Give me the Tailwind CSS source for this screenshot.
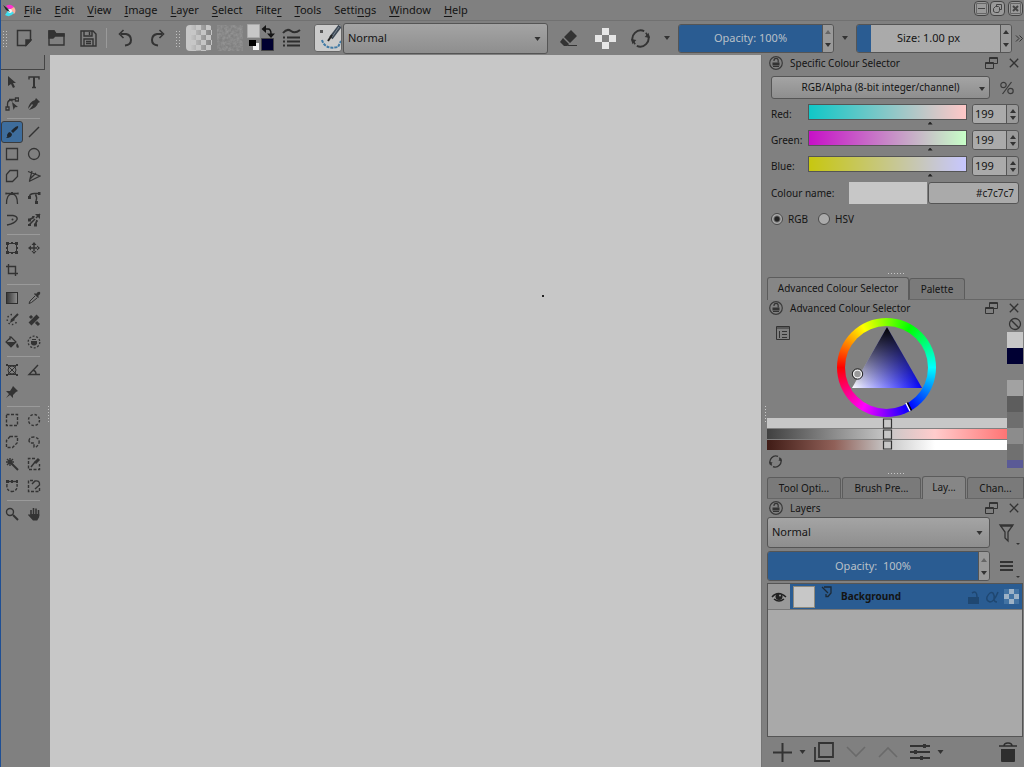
<!DOCTYPE html>
<html lang="en">
	<head>
		<meta charset="UTF-8" />
		<meta name="viewport" content="width=device-width, initial-scale=1.0" />
		<title>Krita</title>
		<script src="https://cdn.jsdelivr.net/npm/@tailwindcss/browser@4"></script>
	</head>
	<body class="bg-[#808080] text-[#141414] font-['Noto_Sans',sans-serif] text-[11px]">
		<!-- shared icons -->
		<svg class="hidden">
			<symbol id="lock" viewBox="0 0 14 14">
				<circle cx="7" cy="7" r="6.3" fill="none" stroke="#3a3a3a" stroke-width="1.2" />
				<path d="M3.5 6.500h7V9.500h-7z" fill="#333" />
				<path d="M5 5V4.500a2.1 2.1 0 0 1 4.2 0v2" fill="none" stroke="#333" stroke-width="1.2" />
				<path d="M4 10.500h6" stroke="#333" />
			</symbol>
			<symbol id="float" viewBox="0 0 13 12">
				<path d="M4.500 5V.5h8v6H8.500M4.500 1.500h8M.5 5.500h8v6h-8zM.5 6.500h8" fill="none" stroke="#333" />
			</symbol>
			<symbol id="close" viewBox="0 0 10 10">
				<path d="M.8.8l8.400 8.400M9.200.8L.8 9.200" fill="none" stroke="#333" stroke-width="1.300" />
			</symbol>
			<symbol id="down" viewBox="0 0 6 4">
				<path d="M0 0h6L3 4z" fill="#333" />
			</symbol>
			<symbol id="spin" viewBox="0 0 6 11">
				<path d="M0 4h6L3 0zM0 7h6L3 11z" fill="#333" />
			</symbol>
			<symbol id="reload" viewBox="0 0 18 18">
				<path d="M2 12.500A8 8 0 0 1 12.500 2M16 5.500A8 8 0 0 1 5.500 16" fill="none" stroke="#333" stroke-width="1.800" />
				<path d="M2.500 11.500A7.500 7.500 0 0 0 4 14.500M15.500 6.500A7.500 7.500 0 0 0 14 3.500" fill="none" stroke="#333" stroke-width="1.500" />
				<path d="M0 9.500l5 1-3.500 4zM18 8.500l-5-1 3.500-4z" fill="#333" />
			</symbol>
			<symbol id="checker" viewBox="0 0 9 9">
				<path d="M3 0h3v3h3v3H6v3H3V6H0V3h3z" fill="#c9c9c9" />
				<path d="M3 0h3v3H3zM0 3h3v3H0zM6 3h3v3H6zM3 6h3v3H3z" fill="#e6e6e6" />
				<path d="M3 3h3v3H3z" fill="#808080" />
			</symbol>
		</svg>

		<div class="flex flex-col min-h-screen border-l border-[#1f4f94]">
			<!-- menu bar -->
			<header class="flex h-[21px] items-center border-b border-[#717171] pl-[2px]">
				<svg width="13" height="13" viewBox="0 0 13 13">
					<path d="M3 2q4-3 8 1l-4 3z" fill="#ff2fd0" />
					<path d="M11 3q3 4 0 7L6 6z" fill="#ffb0a0" />
					<path d="M11 9q-4 5-9 2l4-6z" fill="#3fe0f0" />
					<circle cx="7" cy="7" r="2" fill="#f4f4f4" />
					<path d="M0 1l4 3 3 4-4-2z" fill="#222" />
				</svg>
				<nav class="flex flex-1 gap-[13px] pl-[8px] leading-5">
					<a href="#"><u class="underline-offset-2">F</u>ile</a>
					<a href="#"><u class="underline-offset-2">E</u>dit</a>
					<a href="#"><u class="underline-offset-2">V</u>iew</a>
					<a href="#"><u class="underline-offset-2">I</u>mage</a>
					<a href="#"><u class="underline-offset-2">L</u>ayer</a>
					<a href="#"><u class="underline-offset-2">S</u>elect</a>
					<a href="#">Filte<u class="underline-offset-2">r</u></a>
					<a href="#"><u class="underline-offset-2">T</u>ools</a>
					<a href="#">Setti<u class="underline-offset-2">n</u>gs</a>
					<a href="#"><u class="underline-offset-2">W</u>indow</a>
					<a href="#"><u class="underline-offset-2">H</u>elp</a>
				</nav>
				<div class="flex gap-px pr-px pb-[3px]">
					<button aria-label="Minimise" class="w-[15px] h-[15px] grid place-items-center rounded-sm border border-[#444] bg-[#999]">
						<svg width="11" height="11" fill="none" stroke="#444"><path d="M.5.500h10v10h-10z" stroke="#666" /><path d="M2 5.500h7" /></svg>
					</button>
					<button aria-label="Restore" class="w-[15px] h-[15px] grid place-items-center rounded-sm border border-[#444] bg-[#999]">
						<svg width="11" height="11" fill="none" stroke="#444"><path d="M4.500 3.500v-2h5v5h-2M1.500 5.500l2-2h3l1 1v3l-1 2h-3l-2-1z" /></svg>
					</button>
					<button aria-label="Close" class="w-[15px] h-[15px] ml-[2px] grid place-items-center rounded-sm border border-[#444] bg-[#999]">
						<svg width="11" height="11" fill="none" stroke="#444"><path d="M.5.500h10v10h-10z" stroke="#666" /><path d="M3 3l5 5M8 3L3 8" stroke-width="2" /></svg>
					</button>
				</div>
			</header>

			<!-- tool bar -->
			<div class="flex h-[34px] items-center">
				<div class="w-[6px] h-[17px] ml-px bg-[radial-gradient(#c0c0c0_1px,transparent_1px)] bg-[size:3px_3px]"></div>
				<button aria-label="New" class="w-8 h-8 grid place-items-center">
					<svg width="16" height="18" fill="none" stroke="#333" stroke-width="1.500"><path d="M1.500 1.500h13v10l-4.500 5h-8.500z" /><path d="M10 16v-5h5z" fill="#333" /></svg>
				</button>
				<button aria-label="Open" class="w-8 h-8 grid place-items-center">
					<svg width="17" height="16" fill="none" stroke="#333" stroke-width="1.400"><path d="M1 15V1h5l2 3h8v11z" /><path d="M1 1h5l2 3h8v2H7L5 8H1z" fill="#333" /></svg>
				</button>
				<button aria-label="Save" class="w-8 h-8 grid place-items-center">
					<svg width="17" height="17" fill="none" stroke="#333" stroke-width="1.400"><path d="M1 1h12l3 3v12H1z" /><path d="M4 1v5h8V1M9.500 2v3M4 16V9h9v7M6 11.500h5M6 13.500h5" /></svg>
				</button>
				<div class="w-px h-5 mx-[2px] bg-[#9a9a9a]"></div>
				<button aria-label="Undo" class="w-8 h-8 grid place-items-center">
					<svg width="15" height="18" fill="none" stroke="#333" stroke-width="2"><path d="M3 5h5q5 1 5 6t-6 5.500" /><path d="M5.500 1L1.500 5l4 4" stroke-width="1.600" /></svg>
				</button>
				<button aria-label="Redo" class="w-8 h-8 grid place-items-center">
					<svg width="15" height="18" fill="none" stroke="#333" stroke-width="2"><path d="M12 5H7q-5 1-5 6t6 5.500" /><path d="M9.500 1l4 4-4 4" stroke-width="1.600" /></svg>
				</button>
				<div class="w-[6px] h-[17px] ml-[2px] mr-[5px] bg-[radial-gradient(#c0c0c0_1px,transparent_1px)] bg-[size:3px_3px]"></div>
				<button aria-label="Gradient" class="w-[26px] h-[26px] rounded-sm bg-[linear-gradient(90deg,#c7c7c7_15%,transparent),repeating-conic-gradient(#808080_0_25%,#c4c4c4_0_50%)] bg-[size:100%_100%,10px_10px]"></button>
				<button aria-label="Pattern" class="w-[26px] h-[26px] ml-[5px]">
					<svg width="26" height="26">
						<filter id="grain"><feTurbulence type="fractalNoise" baseFrequency=".35" numOctaves="2" /><feColorMatrix values="0 0 0 0 .4  0 0 0 0 .4  0 0 0 0 .4  1 0 0 0 -.3" /></filter>
						<rect width="26" height="26" filter="url(#grain)" />
					</svg>
				</button>
				<button aria-label="Foreground and background colour" class="ml-[4px] w-[28px] h-[28px]">
					<svg width="28" height="28">
						<path d="M14.500 14.500h12v12h-12z" fill="#000030" stroke="#444" />
						<path d="M.5.500h12v13H.5z" fill="#c7c7c7" stroke="#aaa" />
						<path d="M6 19h6v7H6z" fill="#f0f0f0" /><path d="M2 16h7v6H2z" fill="#000" />
						<path d="M17 5h4q3 0 3 5" fill="none" stroke="#151515" stroke-width="1.500" />
						<path d="M14.500 5l4.500-4v8zM24 14l-4-4.500h8z" fill="#151515" />
					</svg>
				</button>
				<button aria-label="Edit brush settings" class="w-[28px] h-[28px] ml-[2px] grid place-items-center mr-[9px]">
					<svg width="19" height="20" fill="none" stroke="#2e2e2e" stroke-width="2"><path d="M1 5q4-5 8-2t9-1" /><path d="M5 9.500h13M5 13.500h13M5 17.500h13" /><path d="M1 9.500h2M1 13.500h2M1 17.500h2" /></svg>
				</button>
				<button aria-label="Brush preset" class="w-[28px] h-[28px] rounded-[3px] border border-[#666] bg-[#cbcbcb]">
					<svg width="26" height="26" fill="none"><path d="M25 1l-9 12" stroke="#3d4855" stroke-width="4" /><path d="M24 2l-7 10" stroke="#7b8792" /><path d="M17 10l-4 6" stroke="#222" stroke-width="2" /><path d="M5 5h3v3H5z" fill="#555" /><path d="M7 15q3 10 16 7l3-6" stroke="#417aa5" stroke-width="2" stroke-dasharray="3 1" /></svg>
				</button>
				<div class="relative flex-1 ml-px">
					<select aria-label="Blending mode" class="block w-full h-[31px] pl-[4px] appearance-none rounded-[3px] border border-[#555] bg-linear-to-b from-[#a4a4a4] to-[#8e8e8e]">
						<option>Normal</option>
					</select>
					<svg class="absolute right-[7px] top-[14px] pointer-events-none" width="7" height="4"><use href="#down" /></svg>
				</div>
				<button aria-label="Eraser mode" class="w-10 h-8 grid place-items-center">
					<svg width="19" height="18" fill="#333"><path d="M12 1l6 6-7 7-6-6zM4 9l6 6-1.500 2H5l-4-4zM9 16h9v1H9z" /></svg>
				</button>
				<button aria-label="Preserve alpha" class="w-[34px] h-8 grid place-items-center">
					<svg width="21" height="21"><use href="#checker" /></svg>
				</button>
				<button aria-label="Reload preset" class="w-[36px] h-8 grid place-items-center">
					<svg width="19" height="19"><use href="#reload" /></svg>
				</button>
				<button aria-label="More brush options" class="w-[18px] h-8 grid place-items-center">
					<svg width="6" height="4"><use href="#down" /></svg>
				</button>
				<div class="flex w-[156px] h-[29px] ml-[2px] rounded-[3px] border border-[#555] overflow-hidden">
					<input aria-label="Opacity" value="Opacity: 100%" class="flex-1 min-w-0 text-center text-[#b9c0c8] bg-[#2a5c92]" />
					<button aria-label="Change opacity" class="w-[11px] grid place-items-center border-l border-[#555] bg-[#999]"><svg width="6" height="17" viewBox="0 0 6 17" fill="#333"><path d="M0 4h6L3 0z" fill="#666" /><path d="M0 13h6l-3 4z" /></svg></button>
				</div>
				<button aria-label="More opacity options" class="w-[22px] h-8 grid place-items-center">
					<svg width="6" height="4"><use href="#down" /></svg>
				</button>
				<div class="flex w-[156px] h-[29px] rounded-[3px] border border-[#555] overflow-hidden">
					<input aria-label="Size" value="Size: 1.00 px" class="flex-1 min-w-0 text-center bg-linear-to-r from-[#2a5c92] from-10% to-[#aaa] to-10%" />
					<button aria-label="Change size" class="w-[11px] grid place-items-center border-l border-[#555] bg-[#999]"><svg width="6" height="17" viewBox="0 0 6 17" fill="#333"><path d="M0 4h6L3 0zM0 13h6l-3 4z" /></svg></button>
				</div>
				<button aria-label="More tools" class="w-[12px] pl-[2px] grid place-items-center">
					<svg width="8" height="7" fill="none" stroke="#333"><path d="M1 .5l3 3-3 3M4.500.500l3 3-3 3" /></svg>
				</button>
			</div>

			<main class="flex flex-1">
				<!-- tool box -->
				<aside class="flex w-[49px] shrink-0">
					<div class="w-[44px]">
						<div class="h-[15px] w-[44px] border-r border-b border-[#444] mb-px"></div>
						<div class="grid grid-cols-[22px_22px] auto-rows-[22px] *:grid *:place-items-center">
							<button aria-label="Select shapes"><svg width="14" height="14" fill="#333"><path d="M3 1l8 7H8l2 4-2 1-2-4-3 2z" /></svg></button>
							<button aria-label="Text"><svg width="14" height="14" fill="none" stroke="#333"><path d="M2 4.500V2h10v2.500M5 12.500h4" stroke-width="1.400" /><path d="M7 2v10" stroke-width="2" /></svg></button>
							<button aria-label="Edit shapes"><svg width="14" height="14" fill="none" stroke="#333" stroke-width="1.300"><path d="M2.500 10V7q0-4 5-4.500h3M1 10h3v3H1zM10.500 1h3v3h-3zM4 2.500h3v2" /><path d="M7 5l6 5-3 .3L8.500 13z" fill="#333" stroke="none" /></svg></button>
							<button aria-label="Calligraphy"><svg width="14" height="14"><path d="M9 1l4 4-2 1q-1 5-9 7l4-5-1-1-4 5Q2 5 8 3z" fill="#333" /></svg></button>
						</div>
						<div class="h-[6px] flex items-center"><div class="w-[33px] h-px ml-[6px] bg-[#9a9a9a]"></div></div>
						<div class="grid grid-cols-[22px_22px] auto-rows-[22px] *:grid *:place-items-center">
							<button aria-label="Brush" class="rounded-[3px] border border-[#3c3c3c] bg-[#3e6d9c]"><svg width="14" height="14" fill="#1f262d"><path d="M13 1q1 2-3 5L8 8 6 6l2-2q3-3 5-3zM5 7l2 2q0 4-6 4 2-1 1-3 1-3 3-3z" /></svg></button>
							<button aria-label="Line"><svg width="14" height="14"><path d="M2 12L12 2" stroke="#333" stroke-width="1.400" /></svg></button>
							<button aria-label="Rectangle"><svg width="14" height="14" fill="none" stroke="#333" stroke-width="1.300"><path d="M1.500 1.500h11v11h-11z" /></svg></button>
							<button aria-label="Ellipse"><svg width="14" height="14" fill="none" stroke="#333" stroke-width="1.300"><circle cx="7" cy="7" r="5.500" /></svg></button>
							<button aria-label="Polygon"><svg width="14" height="14" fill="none" stroke="#333" stroke-width="1.300"><path d="M5 1.500h7.500v6l-5 5h-6v-7z" /></svg></button>
							<button aria-label="Polyline"><svg width="14" height="14" fill="none" stroke="#333" stroke-width="1.300"><path d="M2.500 12L5 2M1 2.500L13 7 2 12.500M3 10l6-6" /></svg></button>
							<button aria-label="Bezier curve"><svg width="14" height="14" fill="none" stroke="#333" stroke-width="1.300"><path d="M1.500 13q0-10 5.500-10t5.500 10M1 2.500h12M1 1.500v2M13 1.500v2" /><path d="M6 1h2v3H6z" fill="#333" stroke="none" /></svg></button>
							<button aria-label="Freehand path"><svg width="14" height="14" fill="none" stroke="#333" stroke-width="1.400"><path d="M2.500 6q0-3.500 5-3.500h3.500M8.500 3.500q2 3 .5 6.500" /><path d="M1 5h3v3H1zM11 1h2.500v3H11zM8 10h3v3H8z" fill="#333" stroke="none" /></svg></button>
							<button aria-label="Dynamic brush"><svg width="14" height="14" fill="none" stroke="#333" stroke-width="1.500"><path d="M2 2.500h6q5 1 4 4-2 4-10 5.500" /><circle cx="7.500" cy="6.500" r="1" fill="#333" stroke="none" /></svg></button>
							<button aria-label="Multibrush"><svg width="14" height="14" fill="none" stroke="#333" stroke-width="1.500"><path d="M13 1L9 5M7 4L3 6.500M8 6l-6 6M10 7l-2 5" /><path d="M13 1v5L8 1zM5 3l3 0-2 3zM11 8l-2 3 0-4zM1 5.500h3v3H1zM1 11h3v2H1zM7 10.500h3v3H7z" fill="#333" stroke="none" /></svg></button>
						</div>
						<div class="h-[6px] flex items-center"><div class="w-[33px] h-px ml-[6px] bg-[#9a9a9a]"></div></div>
						<div class="grid grid-cols-[22px_22px] auto-rows-[22px] *:grid *:place-items-center">
							<button aria-label="Transform"><svg width="14" height="14" fill="none" stroke="#333"><path d="M2.500 2.500h9v9h-9z" /><path d="M1 1h3v3H1zM10 1h3v3h-3zM1 10h3v3H1zM10 10h3v3h-3zM6 1h2v2H6zM6 11h2v2H6zM1 6h2v2H1zM11 6h2v2h-2z" fill="#333" stroke="none" /></svg></button>
							<button aria-label="Move"><svg width="14" height="14" fill="#333"><path d="M7 1l2.500 3H4.500zM7 13l2.500-3H4.500zM1 7l3-2.500v5zM13 7l-3-2.500v5zM6.300 3h1.400v8H6.300zM3 6.300h8v1.400H3z" /></svg></button>
							<button aria-label="Crop"><svg width="14" height="14" fill="none" stroke="#333" stroke-width="1.400"><path d="M3.500 1v9.500H13M1 3.500h9.500V13" /></svg></button>
						</div>
						<div class="h-[6px] flex items-center"><div class="w-[33px] h-px ml-[6px] bg-[#9a9a9a]"></div></div>
						<div class="grid grid-cols-[22px_22px] auto-rows-[22px] *:grid *:place-items-center">
							<button aria-label="Gradient tool"><span class="block w-[12px] h-[12px] border border-[#2e2e2e] bg-linear-to-r from-[#3a3a3a] to-[#8c8c8c]"></span></button>
							<button aria-label="Colour sampler"><svg width="14" height="14"><path d="M13 1q1 2-2 4l1 1-1 1-4-4 1-1 1 1q2-3 4-2z" fill="#333" /><path d="M8 5L3 10l-1 2.500 2.500-1L10 7" fill="none" stroke="#333" /></svg></button>
							<button aria-label="Colorize mask"><svg width="14" height="14" fill="none" stroke="#333" stroke-width="1.500"><path d="M13 1L8 6" stroke-width="2" /><path d="M8 5l2 2-5 3 1-4z" fill="#333" stroke="none" /><path d="M7 1.500A5 5 0 1 0 12 8" stroke-dasharray="1.500 2.200" /></svg></button>
							<button aria-label="Smart patch"><svg width="14" height="14" fill="none" stroke="#333"><path d="M3 11l8-8" stroke-width="4" /><path d="M3 3l2 2M9 9l3 3" stroke-width="3" /></svg></button>
							<button aria-label="Fill"><svg width="14" height="14"><path d="M6 2l5 5-5 5-5-5z" fill="none" stroke="#333" stroke-width="1.200" /><path d="M1 7h10l-5 5zM12 8q3 4 1 5-3-1-1-5z" fill="#333" /><path d="M5 1v4" stroke="#333" /></svg></button>
							<button aria-label="Enclose and fill"><svg width="14" height="14"><circle cx="7" cy="7" r="5.800" fill="none" stroke="#333" stroke-width="1.300" stroke-dasharray="2 1.600" /><path d="M4 6h6v3q-3 3-6 0zM5 4h4v1H5z" fill="#333" /></svg></button>
						</div>
						<div class="h-[6px] flex items-center"><div class="w-[33px] h-px ml-[6px] bg-[#9a9a9a]"></div></div>
						<div class="grid grid-cols-[22px_22px] auto-rows-[22px] *:grid *:place-items-center">
							<button aria-label="Assistant"><svg width="14" height="14" fill="none" stroke="#333"><circle cx="7" cy="7" r="4" /><path d="M2 2l10 10M12 2L2 12M3 2.500h8M3 11.500h8" /><path d="M1 1h2v2H1zM11 1h2v2h-2zM1 11h2v2H1zM11 11h2v2h-2z" fill="#333" stroke="none" /></svg></button>
							<button aria-label="Measure"><svg width="14" height="14" fill="none" stroke="#333" stroke-width="1.400"><path d="M11 2L2 11.500h11M6 7q3 1 3 4" /></svg></button>
							<button aria-label="Reference images"><svg width="14" height="14"><path d="M8 1l5 5-2 1-3 3v3L5 10l-4 3 3-4-3-3h4l2-3z" fill="#333" /></svg></button>
						</div>
						<div class="h-[6px] flex items-center"><div class="w-[33px] h-px ml-[6px] bg-[#9a9a9a]"></div></div>
						<div class="grid grid-cols-[22px_22px] auto-rows-[22px] *:grid *:place-items-center">
							<button aria-label="Rectangular selection"><svg width="14" height="14" fill="none" stroke="#333" stroke-width="1.400"><path d="M1.500 1.500h11v11h-11z" stroke-dasharray="3 1.500" /></svg></button>
							<button aria-label="Elliptical selection"><svg width="14" height="14" fill="none" stroke="#333" stroke-width="1.400"><circle cx="7" cy="7" r="5.500" stroke-dasharray="2.500 1.800" /></svg></button>
							<button aria-label="Polygonal selection"><svg width="14" height="14" fill="none" stroke="#333" stroke-width="1.400"><path d="M5 1.500h7.500v6l-5 5h-6v-7z" stroke-dasharray="3 1.500" /></svg></button>
							<button aria-label="Freehand selection"><svg width="14" height="14" fill="none" stroke="#333" stroke-width="1.400"><path d="M2 6q0-4 5-4 6 1 5 6-2 5-5 4V8H3z" stroke-dasharray="3 1.500" /></svg></button>
							<button aria-label="Contiguous selection"><svg width="14" height="14" fill="none" stroke="#333"><path d="M5 1v8M1 5h8M2 2l6 6M8 2L2 8" stroke-width="1.400" /><path d="M6 6l7 7" stroke-width="2" /></svg></button>
							<button aria-label="Similar colour selection"><svg width="14" height="14" fill="none" stroke="#333"><path d="M8 1.500H1.500v11h11V7" stroke-width="1.400" stroke-dasharray="3 1.500" /><path d="M12 2L8 6" stroke-width="3" /><path d="M8 5l-4 5" stroke-width="1.500" /></svg></button>
							<button aria-label="Bezier selection"><svg width="14" height="14" fill="none" stroke="#333" stroke-width="1.400"><path d="M1 2.500h12" /><path d="M1 1h3v3H1zM6 1h2v3H6zM11 1h2v3h-2z" fill="#333" stroke="none" /><path d="M2 5q-1 7 5 7.500 6-.5 5-7.500" stroke-dasharray="3 1.500" /></svg></button>
							<button aria-label="Magnetic selection"><svg width="14" height="14" fill="none" stroke="#333" stroke-width="1.400"><path d="M6 1.500H1.500v11h11V8" stroke-dasharray="3 1.500" /><path d="M5 5l3-3q5-1 4.500 4L8 10" /></svg></button>
						</div>
						<div class="h-[6px] flex items-center"><div class="w-[33px] h-px ml-[6px] bg-[#9a9a9a]"></div></div>
						<div class="grid grid-cols-[22px_22px] auto-rows-[22px] *:grid *:place-items-center">
							<button aria-label="Zoom"><svg width="14" height="14" fill="none" stroke="#333"><circle cx="5" cy="5" r="3.500" stroke-width="1.400" /><path d="M8 8l5 5" stroke-width="2" /></svg></button>
							<button aria-label="Pan"><svg width="14" height="14" fill="none" stroke="#333" stroke-width="1.600"><path d="M4 9V3M6.500 9V1M9 9V1.500M11.500 9V3" /><path d="M3.200 7h9v3l-2 3.500H6L1 8l1-1 2 2z" fill="#333" stroke="none" /></svg></button>
						</div>
					</div>
					<div class="w-[3px] h-[17px] ml-[2px] mt-[350px] bg-[radial-gradient(#c0c0c0_1px,transparent_1px)] bg-[size:3px_3px]"></div>
				</aside>

				<!-- canvas -->
				<section class="relative flex-1 bg-[#c7c7c7]">
					<span class="absolute left-[492px] top-[240px] w-[2px] h-[2px] bg-[#222]"></span>
				</section>

				<!-- dockers -->
				<aside class="relative w-[263px] shrink-0 flex flex-col pl-[5px] border-l border-[#757575] text-[10px]">
					<section class="h-[217px] pr-[5px] pl-[4px]">
						<div class="flex h-[16px] items-center">
							<svg class="-ml-[2px]" width="14" height="14"><use href="#lock" /></svg>
							<h2 class="flex-1 pl-[7px]">Specific Colour Selector</h2>
							<button aria-label="Float Specific Colour Selector"><svg width="13" height="12"><use href="#float" /></svg></button>
							<button aria-label="Close Specific Colour Selector" class="ml-[11px]"><svg width="10" height="10"><use href="#close" /></svg></button>
						</div>
						<div class="flex mt-[5px]">
							<div class="relative w-[219px]">
								<select aria-label="Colour model" class="block w-full h-[23px] appearance-none text-center rounded-[3px] border border-[#555] bg-linear-to-b from-[#a4a4a4] to-[#8e8e8e]">
									<option>RGB/Alpha (8-bit integer/channel)</option>
								</select>
								<svg class="absolute right-[5px] top-[11px] pointer-events-none" width="6" height="4"><use href="#down" /></svg>
							</div>
							<button aria-label="Show percentages" class="flex-1 grid place-items-center pl-1"><svg width="14" height="14" fill="none" stroke="#3a3a3a" stroke-width="1.200"><circle cx="3.500" cy="4" r="2.700" /><circle cx="10.500" cy="10" r="2.700" /><path d="M11.500 1l-9 12" /></svg></button>
						</div>
						<div class="grid grid-cols-[37px_1fr_47px] auto-rows-[20px] gap-y-[6px] pt-[5px] items-center">
							<label for="red">Red:</label>
							<input id="red" type="range" min="0" max="255" value="199" class="block self-start w-[159px] h-[16px] appearance-none border border-[#555] bg-[linear-gradient(90deg,#10c7c7,#ffc7c7)] [&::-webkit-slider-thumb]:appearance-none [&::-webkit-slider-thumb]:w-[5px] [&::-webkit-slider-thumb]:h-[3px] [&::-webkit-slider-thumb]:bg-[#222] [&::-webkit-slider-thumb]:translate-y-[11px] [&::-webkit-slider-thumb]:[clip-path:polygon(50%_0,100%_100%,0_100%)]" />
							<div class="flex h-[20px] rounded-[3px] border border-[#555] overflow-hidden bg-[#999]">
								<input aria-label="Red value" value="199" class="min-w-0 flex-1 pl-[2px] text-[11px] bg-[#aaa]" />
								<button aria-label="Change red" class="w-[12px] grid place-items-center border-l border-[#555]"><svg width="6" height="11"><use href="#spin" /></svg></button>
							</div>
							<label for="green">Green:</label>
							<input id="green" type="range" min="0" max="255" value="199" class="block self-start w-[159px] h-[16px] appearance-none border border-[#555] bg-[linear-gradient(90deg,#c710c7,#c7ffc7)] [&::-webkit-slider-thumb]:appearance-none [&::-webkit-slider-thumb]:w-[5px] [&::-webkit-slider-thumb]:h-[3px] [&::-webkit-slider-thumb]:bg-[#222] [&::-webkit-slider-thumb]:translate-y-[11px] [&::-webkit-slider-thumb]:[clip-path:polygon(50%_0,100%_100%,0_100%)]" />
							<div class="flex h-[20px] rounded-[3px] border border-[#555] overflow-hidden bg-[#999]">
								<input aria-label="Green value" value="199" class="min-w-0 flex-1 pl-[2px] text-[11px] bg-[#aaa]" />
								<button aria-label="Change green" class="w-[12px] grid place-items-center border-l border-[#555]"><svg width="6" height="11"><use href="#spin" /></svg></button>
							</div>
							<label for="blue">Blue:</label>
							<input id="blue" type="range" min="0" max="255" value="199" class="block self-start w-[159px] h-[16px] appearance-none border border-[#555] bg-[linear-gradient(90deg,#c7c710,#c7c7ff)] [&::-webkit-slider-thumb]:appearance-none [&::-webkit-slider-thumb]:w-[5px] [&::-webkit-slider-thumb]:h-[3px] [&::-webkit-slider-thumb]:bg-[#222] [&::-webkit-slider-thumb]:translate-y-[11px] [&::-webkit-slider-thumb]:[clip-path:polygon(50%_0,100%_100%,0_100%)]" />
							<div class="flex h-[20px] rounded-[3px] border border-[#555] overflow-hidden bg-[#999]">
								<input aria-label="Blue value" value="199" class="min-w-0 flex-1 pl-[2px] text-[11px] bg-[#aaa]" />
								<button aria-label="Change blue" class="w-[12px] grid place-items-center border-l border-[#555]"><svg width="6" height="11"><use href="#spin" /></svg></button>
							</div>
						</div>
						<div class="flex items-center mt-[6px] h-[22px]">
							<label for="hex" class="w-[78px]">Colour name:</label>
							<div class="flex-1 h-[22px] bg-[#c7c7c7] mr-px"></div>
							<input id="hex" value="#c7c7c7" class="w-[91px] h-[22px] pr-1 text-right rounded-[3px] border border-[#555] bg-[#aaa]" />
						</div>
						<div class="flex items-center h-[16px] mt-[7px]">
							<input id="rgb" name="model" type="radio" checked class="w-[12px] h-[12px] appearance-none rounded-full border border-[#4a4a4a] bg-[radial-gradient(#222_2px,#aaa_4px)]" />
							<label for="rgb" class="pl-[5px] pr-[10px]">RGB</label>
							<input id="hsv" name="model" type="radio" class="w-[12px] h-[12px] appearance-none rounded-full border border-[#4a4a4a] bg-[#aaa]" />
							<label for="hsv" class="pl-[5px]">HSV</label>
						</div>
					</section>

					<div class="w-[18px] h-[3px] mx-auto bg-[radial-gradient(#c8c8c8_1px,transparent_1px)] bg-[size:3px_3px]"></div>

					<nav class="flex items-end h-[24px] mt-px border-b border-[#666] -mb-px">
						<button class="w-[142px] h-[23px] -mb-px pb-[2px] rounded-t-[3px] border border-b-0 border-[#5c5c5c] bg-[#868686]">Advanced Colour Selector</button>
						<button class="w-[56px] h-[21px] rounded-t-[3px] border border-b-0 border-[#5c5c5c] bg-[#7a7a7a]">Palette</button>
					</nav>

					<section class="h-[171px]">
						<div class="flex h-[17px] items-center pt-px pr-[5px] pl-[2px]">
							<svg width="14" height="14"><use href="#lock" /></svg>
							<h2 class="flex-1 pl-[7px]">Advanced Colour Selector</h2>
							<button aria-label="Float Advanced Colour Selector"><svg width="13" height="12"><use href="#float" /></svg></button>
							<button aria-label="Close Advanced Colour Selector" class="ml-[11px]"><svg width="10" height="10"><use href="#close" /></svg></button>
						</div>
						<div class="flex">
							<div class="flex-1">
								<div class="flex h-[102px] items-start pt-[2px]">
									<button aria-label="Selector settings" class="mt-[8px] ml-[9px] mr-[47px]"><svg width="14" height="14" fill="none" stroke="#333"><path d="M.5.500h13v13H.5zM.5 2h13M3.500 5v7M6 5.500h5M6 8.500h5M6 11.500h5" /></svg></button>
									<div class="grid place-items-center w-[99px] h-[99px] rounded-full bg-[conic-gradient(from_270deg,#f00,#ff0,#0f0,#0ff,#00f,#f0f,#f00)]">
										<div class="w-[83px] h-[83px] rounded-full bg-[#808080]">
											<svg class="overflow-visible" width="83" height="83">
												<defs>
													<linearGradient id="sat"><stop stop-color="#fff" /><stop offset="1" stop-color="#00f" /></linearGradient>
													<linearGradient id="val" x1="0" y1="0" x2="0" y2="1"><stop /><stop offset="1" stop-opacity="0" /></linearGradient>
												</defs>
												<path d="M42 1L77 62H7z" fill="url(#sat)" />
												<path d="M42 1L77 62H7z" fill="url(#val)" />
												<circle cx="12.500" cy="48" r="4" fill="#999" stroke="#eee" stroke-width="1.500" />
												<circle cx="12.500" cy="48" r="5.200" fill="none" stroke="#222" />
												<path d="M61 77l4 8" stroke="#fff" stroke-width="1.500" />
												<path d="M62.500 76.500l4 8" stroke="#000" stroke-width="1.500" />
											</svg>
										</div>
									</div>
								</div>
								<div class="relative flex flex-col gap-px">
									<div class="h-[10px] bg-[#c7c7c7]"></div>
									<div class="h-[10px] bg-[linear-gradient(90deg,#404040,#c7c7c7_50%,#ffcccc_70%,#ff7474)]"></div>
									<div class="h-[10px] bg-[linear-gradient(90deg,#401c16,#906058_28%,#c7c7c7_50%,#fff_70%)]"></div>
									<svg class="absolute left-[115px] top-0" width="11" height="32" fill="#c7c7c7" stroke="#333" stroke-width="1.200"><path d="M1.500 1h8v9h-8zM1.500 12h8v9h-8zM1.500 23h8v8h-8z" /></svg>
								</div>
								<button aria-label="Refresh selector" class="block mt-[5px] ml-[2px]"><svg width="13" height="13"><use href="#reload" /></svg></button>
							</div>
							<div class="w-[16px] mr-px *:h-[16px]">
								<button aria-label="Clear history" class="grid place-items-center w-[16px]"><svg width="14" height="14" fill="none" stroke="#333" stroke-width="1.300"><circle cx="7" cy="7" r="5.500" /><path d="M3 3l8 8" /></svg></button>
								<div class="bg-[#c7c7c7]"></div>
								<div class="bg-[#000033]"></div>
								<div></div>
								<div class="bg-[#a2a2a2]"></div>
								<div class="bg-[#5d5d5d]"></div>
								<div class="bg-[#6e6e6e]"></div>
								<div class="bg-[#8c8c8c]"></div>
								<div class="bg-[#707070]"></div>
								<div><div class="h-[8px] bg-[#5a5a96]"></div></div>
							</div>
						</div>
					</section>
					<div class="absolute left-[2px] top-[350px] w-[3px] h-[17px] bg-[radial-gradient(#c8c8c8_1px,transparent_1px)] bg-[size:3px_3px]"></div>

					<div class="w-[18px] h-[3px] mx-auto mt-[2px] bg-[radial-gradient(#c8c8c8_1px,transparent_1px)] bg-[size:3px_3px]"></div>

					<nav class="flex items-end gap-px h-[24px] border-b border-[#666]">
						<button class="w-[74px] h-[21px] rounded-t-[3px] border border-b-0 border-[#5c5c5c] bg-[#7a7a7a]">Tool Opti...</button>
						<button class="w-[79px] h-[21px] rounded-t-[3px] border border-b-0 border-[#5c5c5c] bg-[#7a7a7a]">Brush Pre...</button>
						<button class="w-[44px] h-[23px] -mb-px pb-px rounded-t-[3px] border border-b-0 border-[#5c5c5c] bg-[#868686]">Lay...</button>
						<button class="flex-1 h-[21px] rounded-tl-[3px] border border-b-0 border-[#5c5c5c] bg-[#7a7a7a]">Chan...</button>
					</nav>

					<section class="flex flex-1 flex-col pr-px">
						<div class="flex h-[18px] items-center pl-[2px] pr-[4px]">
							<svg width="14" height="14"><use href="#lock" /></svg>
							<h2 class="flex-1 pl-[7px]">Layers</h2>
							<button aria-label="Float Layers"><svg width="13" height="12"><use href="#float" /></svg></button>
							<button aria-label="Close Layers" class="ml-[11px]"><svg width="10" height="10"><use href="#close" /></svg></button>
						</div>
						<div class="flex">
							<div class="relative w-[223px]">
								<select aria-label="Layer blending mode" class="block w-full h-[31px] pl-[4px] text-[11px] appearance-none rounded-[3px] border border-[#555] bg-linear-to-b from-[#a4a4a4] to-[#8e8e8e]">
									<option>Normal</option>
								</select>
								<svg class="absolute right-[7px] top-[14px] pointer-events-none" width="7" height="4"><use href="#down" /></svg>
							</div>
							<button aria-label="Filter layers" class="flex-1 grid place-items-center pl-[5px]"><svg class="overflow-visible" width="20" height="24" fill="none" stroke="#333" stroke-width="1.300"><path d="M1 4h13l-5 7v9l-3-3v-6zM1 5h13" /><path d="M17 22h4l-2 2z" fill="#333" stroke="none" /></svg></button>
						</div>
						<div class="flex mt-[3px]">
							<div class="flex w-[223px] h-[30px] rounded-[3px] border border-[#555] overflow-hidden">
								<input aria-label="Layer opacity" value="Opacity:  100%" class="flex-1 min-w-0 text-center text-[11px] whitespace-pre text-[#b9c0c8] bg-[#2a5c92]" />
								<button aria-label="Change layer opacity" class="w-[11px] grid place-items-center border-l border-[#555] bg-[#999]"><svg width="6" height="17" viewBox="0 0 6 17" fill="#333"><path d="M0 4h6L3 0z" fill="#666" /><path d="M0 13h6l-3 4z" /></svg></button>
							</div>
							<button aria-label="Layer view options" class="flex-1 grid place-items-center pl-[5px]"><svg class="overflow-visible" width="20" height="24" fill="none" stroke="#333" stroke-width="2"><path d="M1 8h13M1 12h13M1 16h13" /><path d="M17 22h4l-2 2z" fill="#333" stroke="none" /></svg></button>
						</div>
						<div class="flex-1 mt-[2px] border border-[#555] bg-[#a9a9a9]">
							<div class="flex h-[26px] items-center bg-[#2a5c92] border-b border-[#777]">
								<button aria-label="Toggle visibility" class="w-[22px] h-[25px] grid place-items-center bg-[#999]"><svg width="16" height="14"><path d="M1 7q6-7 14 0M3 9q5 4 10 0" fill="none" stroke="#222" stroke-width="1.400" /><circle cx="8" cy="6.500" r="3.500" fill="#222" /><circle cx="9" cy="5.500" r="1" fill="#999" /></svg></button>
								<div class="w-[22px] h-[22px] ml-[3px] bg-[#c7c7c7] border border-[#8f8a7d]"></div>
								<svg class="ml-[6px] mb-[10px]" width="11" height="12" fill="none" stroke="#1c2a38" stroke-width="1.300"><path d="M3 1h7v6l-3 3.500H5V8M1 1l6 6" /></svg>
								<strong class="flex-1 pl-[9px] font-bold">Background</strong>
								<svg width="13" height="14"><path d="M1 7h11v7H1z" fill="#1f4771" /><path d="M5 3q5-3 5 4" fill="none" stroke="#1f4771" stroke-width="1.500" /></svg>
								<svg class="ml-[5px]" width="14" height="12" fill="none" stroke="#1f4771" stroke-width="1.500"><path d="M13 1q-4 10-8 10-4-1-3-5 3-6 6-4 2 3 1 6 0 3 3 3" /></svg>
								<svg class="ml-[5px] mr-[3px]" width="15" height="15"><path d="M0 0h15v15H0z" fill="#4373a3" /><path d="M5 0h5v5H5zM0 5h5v5H0zM10 5h5v5h-5zM5 10h5v5H5z" fill="#9db2c6" /></svg>
							</div>
						</div>
						<div class="flex h-[30px] items-center">
							<button aria-label="Add layer" class="pl-[6px]"><svg width="19" height="19"><path d="M9.500 0v19M0 9.500h19" stroke="#333" stroke-width="2" /></svg></button>
							<button aria-label="Add layer menu" class="pl-[7px] pr-[6px]"><svg width="7" height="4"><use href="#down" /></svg></button>
							<button aria-label="Duplicate layer" class="ml-[2px]"><svg width="20" height="20" fill="none" stroke="#333" stroke-width="1.800"><path d="M5 1h14v14H5zM1 5v14h15" /></svg></button>
							<button aria-label="Move layer down" class="ml-[12px]"><svg width="20" height="12" fill="none" stroke="#6a6a6a" stroke-width="1.600"><path d="M1 1l9 9 9-9" /></svg></button>
							<button aria-label="Move layer up" class="ml-[12px]"><svg width="20" height="12" fill="none" stroke="#6a6a6a" stroke-width="1.600"><path d="M1 11l9-9 9 9" /></svg></button>
							<button aria-label="Layer properties" class="ml-[12px]"><svg width="20" height="18" fill="none" stroke="#333" stroke-width="1.800"><path d="M0 3h20M0 9h20M0 15h20" /><path d="M13 1h3v4h-3zM4 7h3v4H4zM10 13h3v4h-3z" fill="#333" stroke="none" /></svg></button>
							<button aria-label="Layer properties menu" class="px-[7px]"><svg width="7" height="4"><use href="#down" /></svg></button>
							<button aria-label="Delete layer" class="ml-auto mr-[6px]"><svg width="18" height="20"><path d="M0 4h18M5 4q0-3 4-3t4 3" fill="none" stroke="#2e2e2e" stroke-width="1.600" /><path d="M2 7h14v12q0 1-1 1H3q-1 0-1-1z" fill="#2e2e2e" /></svg></button>
						</div>
					</section>
				</aside>
			</main>
		</div>
	</body>
</html>
